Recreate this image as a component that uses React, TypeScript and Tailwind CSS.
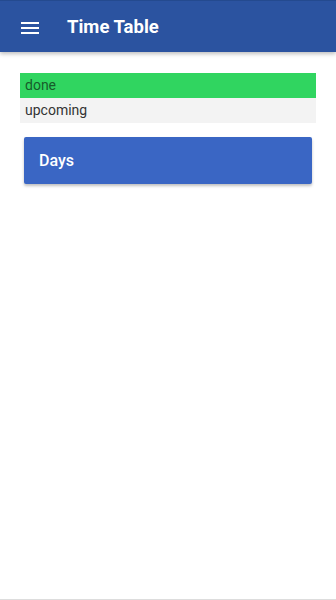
export default function App() {
  return (
    <div className="min-h-[600px] bg-white flex flex-col font-['Roboto',sans-serif]">
      <header className="h-[52px] pt-[3px] bg-[#2b53a0] flex items-center shadow-[0_2px_4px_rgba(0,0,0,0.25)] border-t border-[#244a8f]">
        <div className="w-[18px] ml-[21px] flex flex-col gap-[3px]">
          <span className="h-[2px] bg-white block" />
          <span className="h-[2px] bg-white block" />
          <span className="h-[2px] bg-white block" />
        </div>
        <h1 className="ml-[28px] text-[18.5px] font-bold text-white">Time Table</h1>
      </header>

      <main className="flex-1 px-[20px] pt-[21px]">
        <div className="flex flex-col">
          <div className="h-[25px] bg-[#30d560] px-[5px] flex items-center text-[14px] text-[#175c2a]">
            done
          </div>
          <div className="h-[25px] bg-[#f3f3f3] px-[5px] flex items-center text-[14px] text-[#333]">
            upcoming
          </div>
        </div>

        <div className="mx-[4px] mt-[14px] h-[47px] rounded-[2px] bg-[#3a66c4] shadow-[0_2px_3px_rgba(0,0,0,0.25)] flex items-center px-[15px]">
          <span className="text-white text-[16px] font-medium">Days</span>
        </div>
      </main>

      <div className="h-px bg-[#ddd]" />
    </div>
  );
}
